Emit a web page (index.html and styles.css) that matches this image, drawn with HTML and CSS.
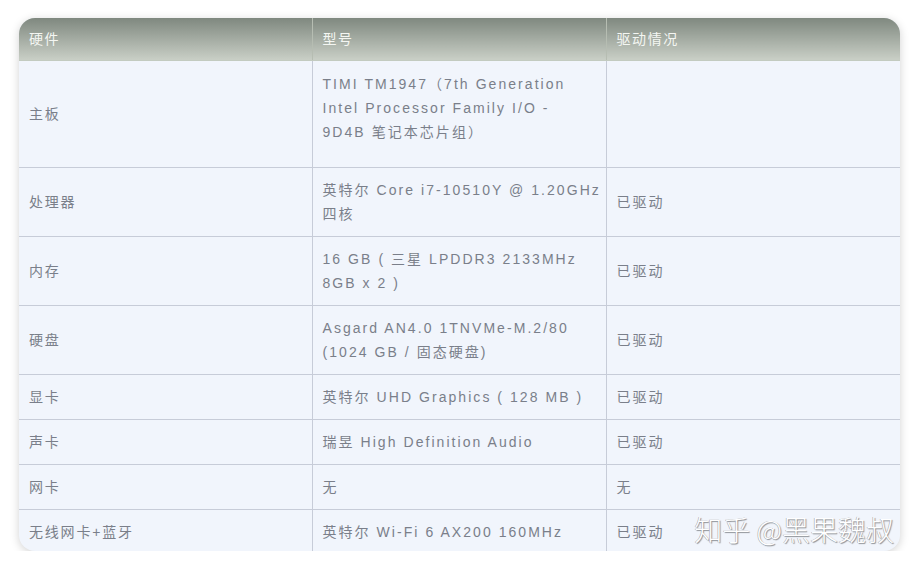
FILE: index.html
```html
<!DOCTYPE html>
<html lang="zh">
<head>
<meta charset="utf-8">
<link rel="stylesheet" href="styles.css">
</head>
<body>
<div class="card">
  <table class="hw">
    <colgroup><col class="c1"><col class="c2"><col class="c3"></colgroup>
    <thead>
      <tr><th>硬件</th><th>型号</th><th>驱动情况</th></tr>
    </thead>
    <tbody>
      <tr><td>主板</td><td class="multi">TIMI TM1947（7th Generation Intel Processor Family I/O - 9D4B 笔记本芯片组）</td><td></td></tr>
      <tr><td>处理器</td><td>英特尔 Core i7-10510Y @ 1.20GHz 四核</td><td>已驱动</td></tr>
      <tr><td>内存</td><td>16 GB ( 三星 LPDDR3 2133MHz 8GB x 2 )</td><td>已驱动</td></tr>
      <tr><td>硬盘</td><td>Asgard AN4.0 1TNVMe-M.2/80 (1024 GB / 固态硬盘)</td><td>已驱动</td></tr>
      <tr><td>显卡</td><td>英特尔 UHD Graphics ( 128 MB )</td><td>已驱动</td></tr>
      <tr><td>声卡</td><td>瑞昱 High Definition Audio</td><td>已驱动</td></tr>
      <tr><td>网卡</td><td>无</td><td>无</td></tr>
      <tr class="last"><td>无线网卡+蓝牙</td><td>英特尔 Wi-Fi 6 AX200 160MHz</td><td>已驱动</td></tr>
    </tbody>
  </table>
  <div class="mark">知乎 @黑果魏叔</div>
</div>
</body>
</html>
```
FILE: styles.css
```css
html, body {
  margin: 0;
  padding: 0;
  background: #ffffff;
}
body {
  padding: 18px 18px 0 19px;
  font-family: "Liberation Sans", "Noto Sans CJK SC", sans-serif;
}
.card {
  position: relative;
  width: 881px;
  height: 533px;
  border-radius: 16px;
  overflow: hidden;
  background: #f1f5fc;
  box-shadow: 0 2px 10px rgba(0, 0, 0, 0.18);
}
.hw {
  width: 881px;
  table-layout: fixed;
  border-collapse: collapse;
  font-size: 14px;
  letter-spacing: 2.05px;
  color: #7a7f8a;
}
.c1 { width: 293px; }
.c2 { width: 294px; }
.c3 { width: 294px; }
.hw th {
  height: 39px;
  padding: 0 10px 3px;
  text-align: left;
  font-weight: normal;
  letter-spacing: 1.6px;
  color: #f4f6f2;
  background: linear-gradient(#7f887f, #c9cfc6);
  border-left: 1px solid #b6bdb2;
  border-bottom: 1px solid #c3cbc0;
}
.hw th:first-child { border-left: none; }
.hw td {
  padding: 10px 4px 10px 10px;
  line-height: 24px;
  vertical-align: middle;
  border-left: 1px solid #c7ccd8;
  border-top: 1px solid #c7ccd8;
  word-wrap: break-word;
}
.hw td:first-child { letter-spacing: 1.8px; }
.hw tbody tr:first-child td { border-top: none; }
.hw td:first-child { border-left: none; }
.hw td.multi { padding-top: 11px; padding-bottom: 23px; padding-right: 30px; }
.hw tr.last td { padding-bottom: 8px; }
.mark {
  position: absolute;
  right: 6px;
  bottom: 2px;
  font-family: "Noto Sans CJK SC", sans-serif;
  font-size: 28px;
  font-weight: 300;
  letter-spacing: 0;
  color: #ffffff;
  text-shadow: 1px 1px 1px #8c8f94, -0.5px -0.5px 0.5px #9a9da3;
}
```
